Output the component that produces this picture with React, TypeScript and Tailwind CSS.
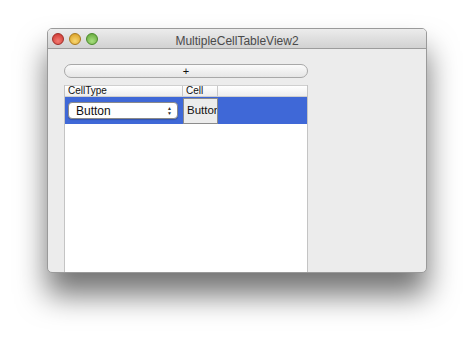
import React from 'react';

const Light = ({ from, to, ring }: { from: string; to: string; ring: string }) => (
  <span
    className="block h-[12px] w-[12px] rounded-full border"
    style={{ background: `radial-gradient(circle at 50% 70%, ${to}, ${from})`, borderColor: ring }}
  />
);

const App = () => {
  return (
    <div className="h-[338px] w-[474px] overflow-hidden bg-white pl-[47px] pt-[28px] font-['Liberation_Sans',sans-serif]">
      <div className="flex h-[245px] w-[380px] flex-col overflow-hidden rounded-[5px] border border-[#9a9a9a] bg-[#ececec] shadow-[0_22px_30px_rgba(0,0,0,0.55)]">
        {/* title bar */}
        <div className="relative flex h-[20px] items-center border-b border-[#9c9c9c] bg-linear-to-b from-[#ececec] to-[#d2d2d2] px-[4px]">
          <div className="flex items-center gap-[5px]">
            <Light from="#c9302a" to="#f47b73" ring="#9f2d28" />
            <Light from="#d79a1d" to="#f8d772" ring="#a8791d" />
            <Light from="#5ea234" to="#a8e07f" ring="#4a8a2b" />
          </div>
          <div className="absolute inset-x-0 top-[3px] text-center text-[12px] text-[#4a4a4a]">MultipleCellTableView2</div>
        </div>

        {/* content */}
        <div className="flex flex-1 flex-col pl-[16px] pt-[15px]">
          <button className="flex h-[14px] w-[244px] items-center justify-center rounded-full border border-[#a8a8a8] bg-linear-to-b from-[#fbfbfb] to-[#e6e6e6] text-[11px] leading-none text-[#111]">
            +
          </button>

          <div className="mt-[7px] flex w-[244px] flex-1 flex-col border-x border-[#c4c4c4] bg-white">
            <div className="flex h-[12px] border-y border-[#cfcfcf] bg-linear-to-b from-white to-[#eeeeee] text-[10px] leading-[10px] text-[#111]">
              <div className="w-[118px] border-r border-[#c8c8c8] pl-[3px]">CellType</div>
              <div className="w-[35px] border-r border-[#c8c8c8] pl-[3px]">Cell</div>
              <div className="flex-1" />
            </div>
            <div className="flex h-[27px] bg-[#3f68d7]">
              <div className="flex w-[118px] items-center pl-[3px]">
                <div className="flex h-[17px] w-[110px] items-center justify-between rounded-[4px] border border-[#8a8a8a] bg-white pl-[7px] pr-[5px] text-[12px] text-[#111] shadow-[0_1px_1px_rgba(0,0,0,0.2)]">
                  <span>Button</span>
                  <span className="flex flex-col text-[5px] leading-[5px] text-[#333]">
                    <span>▲</span>
                    <span>▼</span>
                  </span>
                </div>
              </div>
              <div className="mt-[1px] flex h-[26px] w-[35px] items-center overflow-hidden border border-[#8c8c8c] bg-[#ececec] pl-[3px] text-[11.5px] text-[#111]">
                <span className="whitespace-nowrap">Button</span>
              </div>
            </div>
          </div>
        </div>
      </div>
    </div>
  );
};

export default App;
